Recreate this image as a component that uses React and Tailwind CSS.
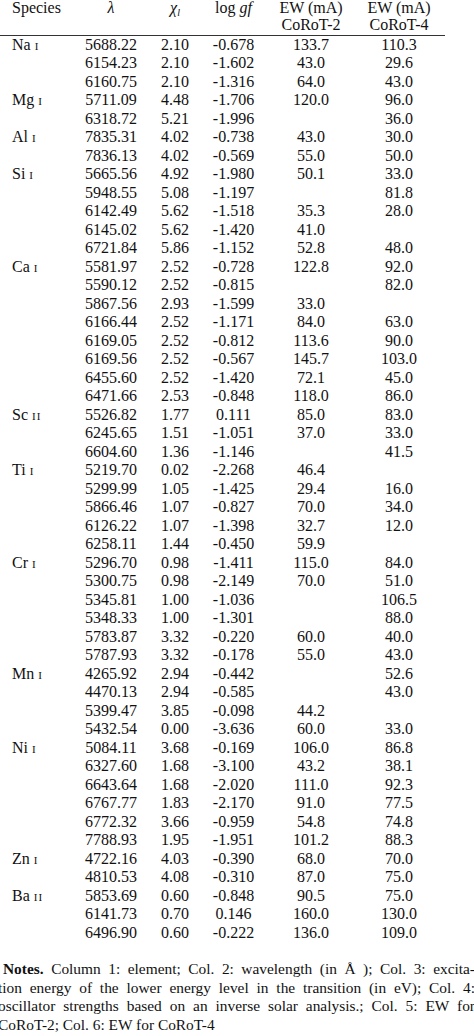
import React from "react";

const rows = [
  ["Na", "I", [["5688.22","2.10","-0.678","133.7","110.3"],["6154.23","2.10","-1.602","43.0","29.6"],["6160.75","2.10","-1.316","64.0","43.0"]]],
  ["Mg", "I", [["5711.09","4.48","-1.706","120.0","96.0"],["6318.72","5.21","-1.996","","36.0"]]],
  ["Al", "I", [["7835.31","4.02","-0.738","43.0","30.0"],["7836.13","4.02","-0.569","55.0","50.0"]]],
  ["Si", "I", [["5665.56","4.92","-1.980","50.1","33.0"],["5948.55","5.08","-1.197","","81.8"],["6142.49","5.62","-1.518","35.3","28.0"],["6145.02","5.62","-1.420","41.0",""],["6721.84","5.86","-1.152","52.8","48.0"]]],
  ["Ca", "I", [["5581.97","2.52","-0.728","122.8","92.0"],["5590.12","2.52","-0.815","","82.0"],["5867.56","2.93","-1.599","33.0",""],["6166.44","2.52","-1.171","84.0","63.0"],["6169.05","2.52","-0.812","113.6","90.0"],["6169.56","2.52","-0.567","145.7","103.0"],["6455.60","2.52","-1.420","72.1","45.0"],["6471.66","2.53","-0.848","118.0","86.0"]]],
  ["Sc", "II", [["5526.82","1.77","0.111","85.0","83.0"],["6245.65","1.51","-1.051","37.0","33.0"],["6604.60","1.36","-1.146","","41.5"]]],
  ["Ti", "I", [["5219.70","0.02","-2.268","46.4",""],["5299.99","1.05","-1.425","29.4","16.0"],["5866.46","1.07","-0.827","70.0","34.0"],["6126.22","1.07","-1.398","32.7","12.0"],["6258.11","1.44","-0.450","59.9",""]]],
  ["Cr", "I", [["5296.70","0.98","-1.411","115.0","84.0"],["5300.75","0.98","-2.149","70.0","51.0"],["5345.81","1.00","-1.036","","106.5"],["5348.33","1.00","-1.301","","88.0"],["5783.87","3.32","-0.220","60.0","40.0"],["5787.93","3.32","-0.178","55.0","43.0"]]],
  ["Mn", "I", [["4265.92","2.94","-0.442","","52.6"],["4470.13","2.94","-0.585","","43.0"],["5399.47","3.85","-0.098","44.2",""],["5432.54","0.00","-3.636","60.0","33.0"]]],
  ["Ni", "I", [["5084.11","3.68","-0.169","106.0","86.8"],["6327.60","1.68","-3.100","43.2","38.1"],["6643.64","1.68","-2.020","111.0","92.3"],["6767.77","1.83","-2.170","91.0","77.5"],["6772.32","3.66","-0.959","54.8","74.8"],["7788.93","1.95","-1.951","101.2","88.3"]]],
  ["Zn", "I", [["4722.16","4.03","-0.390","68.0","70.0"],["4810.53","4.08","-0.310","87.0","75.0"]]],
  ["Ba", "II", [["5853.69","0.60","-0.848","90.5","75.0"],["6141.73","0.70","0.146","160.0","130.0"],["6496.90","0.60","-0.222","136.0","109.0"]]],
];

function Row({ species, ion, vals }) {
  return (
    <div className="flex h-[18.5px] leading-[18.5px] pl-[12px]">
      <div className="w-[60px] text-left whitespace-nowrap">
        {species ? (
          <>
            {species}
            <span className="text-[11px] ml-[4px] tracking-[1px]">{ion}</span>
          </>
        ) : null}
      </div>
      <div className="w-[78px] text-center">{vals[0]}</div>
      <div className="w-[50px] text-center">{vals[1]}</div>
      <div className="w-[67px] text-center">{vals[2]}</div>
      <div className="w-[88px] text-center">{vals[3]}</div>
      <div className="w-[88px] text-center">{vals[4]}</div>
    </div>
  );
}

function HeaderCell({ w, top, bottom, className = "" }) {
  return (
    <div className={`${w} flex flex-col whitespace-nowrap ${className}`}>
      <div className="h-[16px] leading-[16px]">{top}</div>
      <div className="h-[18.5px] leading-[18.5px]">{bottom}</div>
    </div>
  );
}

export default function App() {
  return (
    <div
      className="w-[474px] h-[1036px] overflow-hidden bg-white text-[#111] text-[16px]"
      style={{ fontFamily: '"Liberation Serif", "Times New Roman", serif' }}
    >
      <div className="flex pl-[12px]">
        <HeaderCell w="w-[60px] text-left" top="Species" />
        <HeaderCell w="w-[78px] text-center" top={<span className="italic">λ</span>} />
        <HeaderCell
          w="w-[50px] text-center"
          top={
            <span className="italic">
              χ<span className="text-[10px] relative top-[3px]">l</span>
            </span>
          }
        />
        <HeaderCell
          w="w-[67px] text-center"
          top={
            <>
              log <span className="italic">gf</span>
            </>
          }
        />
        <HeaderCell w="w-[88px] text-center" top="EW (mA)" bottom="CoRoT-2" />
        <HeaderCell w="w-[88px] text-center" top="EW (mA)" bottom="CoRoT-4" />
      </div>
      <div className="w-[445px] h-[1.3px] bg-[#333]" />
      {rows.map(([sp, ion, vals]) =>
        vals.map((v, i) => (
          <Row key={sp + i} species={i === 0 ? sp : ""} ion={ion} vals={v} />
        ))
      )}
      <div className="mt-[18px] ml-[-2px] w-[477px] leading-[18.5px] text-[15.4px]">
        <div className="text-justify [text-align-last:justify] pl-[5px] whitespace-nowrap">
          <span className="font-bold">Notes.</span> Column 1: element; Col. 2: wavelength (in Å ); Col. 3: excita-
        </div>
        <div className="text-justify [text-align-last:justify] whitespace-nowrap">
          tion energy of the lower energy level in the transition (in eV); Col. 4:
        </div>
        <div className="text-justify [text-align-last:justify] whitespace-nowrap">
          oscillator strengths based on an inverse solar analysis.; Col. 5: EW for
        </div>
        <div className="whitespace-nowrap">CoRoT-2; Col. 6: EW for CoRoT-4</div>
      </div>
    </div>
  );
}
